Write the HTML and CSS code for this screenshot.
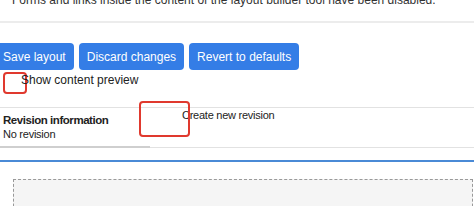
FILE: index.html
```html
<!DOCTYPE html>
<html lang="en">
  <head>
    <meta charset="UTF-8" />
    <meta name="viewport" content="width=device-width, initial-scale=1.0" />
    <title>Layout builder</title>
    <link rel="stylesheet" href="styles.css">
  </head>
  <body>
    <p class="notice">
      Forms and links inside the content of the layout builder tool have been disabled.
    </p>

    <div class="actions">
      <button class="btn">Save layout</button>
      <button class="btn">Discard changes</button>
      <button class="btn">Revert to defaults</button>
    </div>

    <label class="preview">
      <span class="mark mark-check"></span>
      <span class="preview-text">Show content preview</span>
    </label>

    <section class="revision">
      <span class="mark mark-revision"></span>
      <div class="revision-info">
        <strong>Revision information</strong>
        <div>No revision</div>
      </div>
      <div class="revision-options">Create new revision</div>
    </section>

    <div class="builder">
      <div class="dropzone"></div>
    </div>
  </body>
</html>
```

FILE: styles.css
```css
body {
  margin: 0;
  font-family: "Liberation Sans", Arial, sans-serif;
  font-size: 12px;
  color: #222;
  background: white;
  overflow: hidden;
}
.notice {
  margin: -8px 0 0;
  padding: 0 12px;
  height: 29px;
  line-height: 16px;
  color: #333;
  white-space: nowrap;
  border-bottom: 2px solid #ececec;
}
.actions {
  display: flex;
  gap: 5px;
  margin: 20px 0 0 -5px;
}
.btn {
  height: 27px;
  padding: 0 8px;
  border: none;
  border-radius: 4px;
  background-color: #347de6;
  color: white;
  font-family: inherit;
  font-size: 12px;
}
.mark {
  display: block;
  border: 2px solid #e0392e;
  border-radius: 4px;
  box-sizing: border-box;
}
.preview {
  display: flex;
  align-items: flex-start;
  margin: 2px 0 0 3px;
}
.mark-check {
  width: 24px;
  height: 22px;
}
.preview-text {
  margin-left: -6px;
  line-height: 16px;
}
.revision {
  position: relative;
  display: flex;
  margin-top: 13px;
  font-size: 11px;
  letter-spacing: -0.25px;
  line-height: 14px;
  border-top: 1px solid #e2e2e2;
  border-bottom: 1px solid #e2e2e2;
}
.mark-revision {
  position: absolute;
  top: -7px;
  left: 139px;
  width: 51px;
  height: 36px;
}
.revision-info {
  width: 147px;
  padding: 5px 0 5px 3px;
  border-bottom: 2px solid #cfcfcf;
  margin-bottom: -1px;
}
.revision-info strong {
  font-size: 11.5px;
  letter-spacing: -0.45px;
}
.revision-options {
  padding-left: 32px;
}
.builder {
  margin-top: 12px;
  border-top: 2px solid #4a8ad6;
}
.dropzone {
  height: 60px;
  margin: 17px 1px 0 13px;
  border: 1px dashed #999;
  background-color: #f5f5f5;
}
```
